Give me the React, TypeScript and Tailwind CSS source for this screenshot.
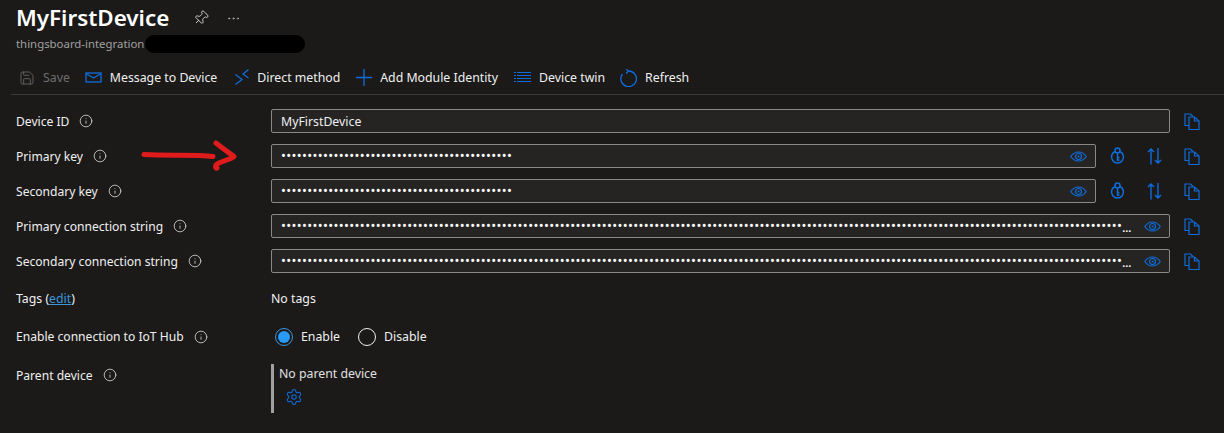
import { Info, MoreHorizontal, Pin, Save, Settings } from "lucide-react";

const font = { fontFamily: '"Noto Sans", sans-serif' };

const InfoIcon = () => <Info size={14} strokeWidth={1.4} className="text-[#d8d8d8] shrink-0" />;

const CopyIcon = () => (
  <svg width="16" height="17" viewBox="0 0 16 17" fill="none" stroke="#0f6cdb" strokeWidth="1.2">
    <path d="M5 12.500H1V1h5.500L9 3.500" />
    <path d="M5 4h5.500L15 8v8.500H5z" />
    <path d="M10.500 4v4H15" />
  </svg>
);

const EyeIcon = () => (
  <svg width="17" height="11" viewBox="0 0 17 11" fill="none" stroke="#0f6cdb" strokeWidth="1.200" className="shrink-0">
    <path d="M.7 5.500C3 2.200 5.500 1 8.500 1s5.500 1.200 7.800 4.500C14 8.800 11.500 10 8.500 10S3 8.800.7 5.500z" />
    <circle cx="8.500" cy="5.500" r="3" />
    <circle cx="8.500" cy="5.500" r="1" fill="#0f6cdb" stroke="none" />
  </svg>
);

const KeyIcon = () => (
  <svg width="15" height="19" viewBox="0 0 15 19" fill="none" stroke="#0f6cdb" strokeWidth="1.500">
    <circle cx="7.500" cy="3.500" r="2.500" />
    <path d="M5 4.500a6 6 0 1 0 5 0" />
    <path d="M7.500 6v8M7.500 10.500h2M7.500 13h2" />
  </svg>
);

const SwapIcon = () => (
  <svg width="15" height="17" viewBox="0 0 15 17" fill="none" stroke="#0f6cdb" strokeWidth="1.400">
    <path d="M4 16.500V1M1 4l3-3 3 3" />
    <path d="M11 0v15M8 12l3 3 3-3" />
  </svg>
);

const DirectIcon = () => (
  <svg width="14" height="17" viewBox="0 0 14 17" fill="none" stroke="#0f6cdb" strokeWidth="1.300">
    <path d="M.5 5.500L7 10.500.5 15.500" />
    <path d="M13.500.5L8 5l5.500 4" />
  </svg>
);

const PlusIcon = () => (
  <svg width="16" height="17" viewBox="0 0 16 17" stroke="#0f6cdb" strokeWidth="1.300">
    <path d="M0 8.500h16M8 0v17" />
  </svg>
);

const TwinIcon = () => (
  <svg width="17" height="11" viewBox="0 0 17 11" stroke="#0f6cdb" strokeWidth="1">
    <path d="M0 .5h2M3 .5h14M0 3.500h2M3 3.500h14M0 6.500h2M3 6.500h14M0 9.500h2M3 9.500h14" />
  </svg>
);

const MailIcon = () => (
  <svg width="17" height="11" viewBox="0 0 17 11" fill="none" stroke="#0f6cdb" strokeWidth="1.300">
    <rect x="1" y="1" width="15" height="9" />
    <path d="M1 1.500l7.500 4.500 7.500-4.500" />
  </svg>
);

const RefreshIcon = () => (
  <svg width="17" height="18" viewBox="0 0 17 18" fill="none" stroke="#0f6cdb" strokeWidth="1.300">
    <path d="M8.500 2a7.800 7.800 0 1 1-6 3" />
    <path d="M6 0l2.500 2L6 4.500" />
  </svg>
);

const Arrow = () => (
  <svg width="100" height="34" viewBox="0 0 100 34" fill="none" stroke="#e01b1b" strokeWidth="5" strokeLinecap="round" strokeLinejoin="round">
    <path d="M4 14.500C30 16 55 14 73 16.500" />
    <path d="M76 3C82 8 88 12 94 16.500 88 21 80 21 76 25c-1 2 0 4 1 3" />
  </svg>
);

const ToolItem = ({ icon, label, off, className = "" }: { icon: React.ReactNode; label: string; off?: boolean; className?: string }) => (
  <div className={`flex items-center gap-2 ${className}`}>
    {icon}
    <span className={off ? "pt-[2px] text-[#6e6e6e]" : "pt-[2px] text-[#f0f0f0]"}>{label}</span>
  </div>
);

const Secret = ({ count }: { count: number }) => (
  <span className="text-white tracking-[0.37px] text-[13px] whitespace-nowrap">{"•".repeat(count)}</span>
);

const Field = ({ children, width = "w-[899px]" }: { children: React.ReactNode; width?: string }) => (
  <div className={`h-6 flex items-center justify-between pl-[9px] pr-2 bg-[#252423] border border-[#8a8886] rounded-[2px] ${width}`}>
    {children}
  </div>
);

const Row = ({ label, children }: { label: string; children: React.ReactNode }) => (
  <div className="flex items-center h-6">
    <div className="w-[255px] pt-[1px] flex items-center gap-[10px] text-[12.1px] text-[#f0f0f0]">
      <span className="pt-[2px]">{label}</span>
      <InfoIcon />
    </div>
    {children}
  </div>
);

const KeyRow = ({ label, children }: { label: string; children: React.ReactNode }) => (
  <Row label={label}>
    <Field width="w-[825px]">
      {children}
      <EyeIcon />
    </Field>
    <div className="ml-[14px] flex items-center gap-[22px]">
      <KeyIcon />
      <SwapIcon />
    </div>
    <div className="ml-[22px]"><CopyIcon /></div>
  </Row>
);

const ConnRow = ({ label }: { label: string }) => (
  <Row label={label}>
    <Field>
      <span className="flex items-end text-white">
        <Secret count={160} />
        <span className="text-[11px] leading-none mb-[3px] font-semibold">...</span>
      </span>
      <EyeIcon />
    </Field>
    <div className="ml-[14px]"><CopyIcon /></div>
  </Row>
);

const App = () => {
  return (
    <div className="relative w-[1224px] h-[433px] overflow-hidden bg-[#1b1a19] text-[12.3px]" style={font}>
      <div className="pl-4 pt-[2px] h-[60px]">
        <div className="flex items-center h-8">
          <h1 className="text-[22.4px] font-semibold leading-8 text-white">MyFirstDevice</h1>
          <Pin size={16} strokeWidth={1.3} className="ml-[24px] text-[#e0e0e0] rotate-45" />
          <MoreHorizontal size={15} strokeWidth={1} className="ml-[17px] text-[#c8c8c8]" />
        </div>
        <div className="flex items-center text-[11.4px] text-[#a0a0a0] leading-4 mt-[1px]">
          <span>thingsboard-integration</span>
          <span className="w-[160px] h-[18px] ml-[1px] bg-black rounded-full" />
        </div>
      </div>

      <div className="ml-[11px] h-[35px] pl-[8px] pt-[1px] flex items-center gap-[16px] border-b border-[#3b3a39]">
        <ToolItem off label="Save" icon={<Save size={16} strokeWidth={1.200} className="text-[#6e6e6e]" />} />
        <ToolItem className="-ml-px" label="Message to Device" icon={<MailIcon />} />
        <ToolItem className="ml-[2px]" label="Direct method" icon={<DirectIcon />} />
        <ToolItem label="Add Module Identity" icon={<PlusIcon />} />
        <ToolItem label="Device twin" icon={<TwinIcon />} />
        <ToolItem className="-ml-px" label="Refresh" icon={<RefreshIcon />} />
      </div>

      <div className="pl-4 pt-[14px] flex flex-col gap-[11px]">
        <Row label="Device ID">
          <Field><span className="pt-[2px] text-[#f0f0f0]">MyFirstDevice</span></Field>
          <div className="ml-[14px]"><CopyIcon /></div>
        </Row>
        <KeyRow label="Primary key"><Secret count={44} /></KeyRow>
        <KeyRow label="Secondary key"><Secret count={44} /></KeyRow>
        <ConnRow label="Primary connection string" />
        <ConnRow label="Secondary connection string" />
      </div>

      <div className="pl-4 mt-[16px] flex items-center h-5">
        <div className="w-[255px] text-[#f0f0f0]">Tags (<span className="text-[#3a96dd] underline">edit</span>)</div>
        <span className="text-[#f0f0f0]">No tags</span>
      </div>

      <div className="pl-4 mt-[18px] flex items-center h-5">
        <div className="w-[259px] flex items-center gap-[10px] text-[12.1px] text-[#f0f0f0]">
          <span>Enable connection to IoT Hub</span>
          <InfoIcon />
        </div>
        <div className="flex items-center gap-2 text-[#f0f0f0]">
          <span className="w-[18px] h-[18px] rounded-full border border-[#3a96dd] flex items-center justify-center">
            <span className="w-3 h-3 rounded-full bg-[#2899f5]" />
          </span>
          <span>Enable</span>
          <span className="ml-[10px] w-[18px] h-[18px] rounded-full border border-[#f0f0f0]" />
          <span>Disable</span>
        </div>
      </div>

      <div className="pl-4 mt-[18px] flex items-start">
        <div className="w-[255px] flex items-center gap-[10px] text-[12.1px] text-[#f0f0f0] h-5">
          <span className="pt-[2px]">Parent device</span>
          <InfoIcon />
        </div>
        <div className="h-[49px] border-l-[3px] border-[#a0a0a0] pl-[5px] -mt-[1px]">
          <div className="pt-[1px] text-[#e0e0e0]">No parent device</div>
          <Settings size={18} strokeWidth={1.400} className="ml-[6px] mt-[5px] text-[#0f6cdb]" />
        </div>
      </div>

      <div className="absolute left-[140px] top-[140px]"><Arrow /></div>
    </div>
  );
};

export default App;
